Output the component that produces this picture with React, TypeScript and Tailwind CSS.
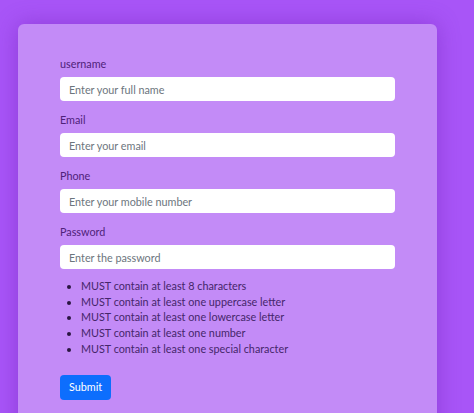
import React from "react";

const fields = [
  { label: "username", type: "text", placeholder: "Enter your full name" },
  { label: "Email", type: "email", placeholder: "Enter your email" },
  { label: "Phone", type: "tel", placeholder: "Enter your mobile number" },
  { label: "Password", type: "password", placeholder: "Enter the password" },
];

const rules = [
  "MUST contain at least 8 characters",
  "MUST contain at least one uppercase letter",
  "MUST contain at least one lowercase letter",
  "MUST contain at least one number",
  "MUST contain at least one special character",
];

const App = () => {
  return (
    <div
      className="h-screen overflow-hidden bg-[#a855f7] pt-[24px] pl-[18px] text-[10.8px]"
      style={{ fontFamily: "Lato, 'Liberation Sans', sans-serif" }}
    >
      <div className="w-[419px] min-h-[420px] rounded-[6px] bg-[#c38bf7] px-[42px] pt-[32px] shadow-[0_0_22px_rgba(110,30,180,0.45)]">
        <form className="flex flex-col items-start" onSubmit={(e) => e.preventDefault()}>
          {fields.map((f) => (
            <div className="w-full mb-[11px]" key={f.label}>
              <label className="block leading-[16px] mb-[5px] text-[#4f2279]">
                {f.label}
              </label>
              <input
                type={f.type}
                placeholder={f.placeholder}
                className="block w-full h-[24px] rounded-[4px] bg-white px-[9px] text-[10.8px] text-[#212529] placeholder:text-[#6c757d] outline-none"
              />
            </div>
          ))}
          <ul className="-mt-[2px] list-disc pl-[21px] text-[#45266a] leading-[15.7px] marker:text-[#2a1640]">
            {rules.map((r) => (
              <li key={r}>{r}</li>
            ))}
          </ul>
          <button
            type="submit"
            className="mt-[18px] h-[25px] rounded-[4px] bg-[#0d6efd] px-[9px] text-white"
          >
            Submit
          </button>
        </form>
      </div>
    </div>
  );
};

export default App;
